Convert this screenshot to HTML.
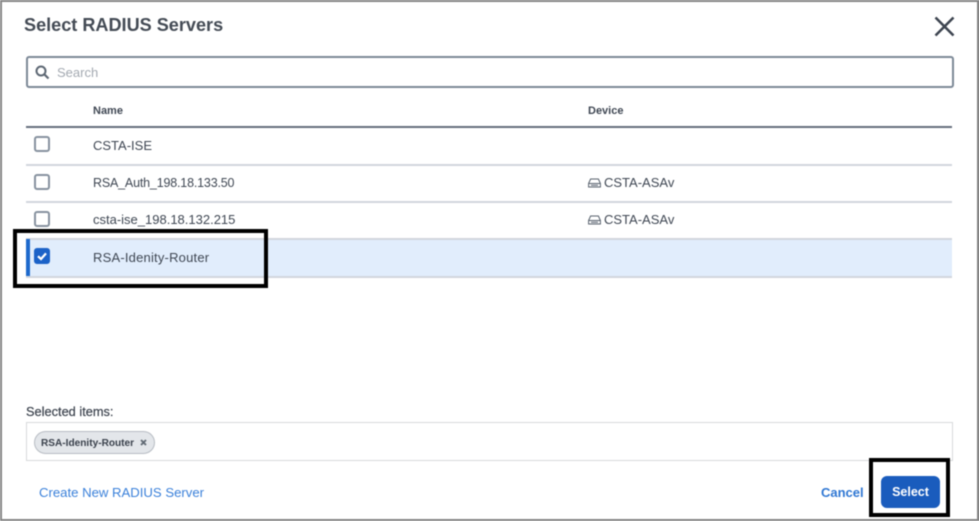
<!DOCTYPE html>
<html><head><meta charset="utf-8"><style>
html,body{margin:0;padding:0;background:#fff}
body{width:979px;height:521px;position:relative;overflow:hidden;font-family:"Liberation Sans",sans-serif;color:#3b4350}
#w{position:absolute;left:0;top:0;width:979px;height:521px;filter:blur(.45px)}
.a{position:absolute;white-space:nowrap}
.cb{position:absolute;left:34.3px;width:11.5px;height:11.5px;border:2px solid #87929f;border-radius:3px;background:#fff}
.ln{position:absolute;left:26px;width:926px;height:2px;background:#d2d6de}
.t{position:absolute;left:93px;font-size:13px;line-height:16px;color:#3f4753;white-space:nowrap}
.d{position:absolute;left:604px;font-size:13px;line-height:16px;color:#3f4753;white-space:nowrap}
svg{position:absolute;overflow:visible}
</style></head><body><div id="w">
<div class="a" style="left:0;top:0;width:975px;height:517px;border:2px solid #858585;border-right-width:3px"></div>
<div class="a" style="left:24px;top:14px;font-size:18.1px;line-height:22px;font-weight:bold;color:#444b55">Select RADIUS Servers</div>
<svg style="left:934px;top:16px" width="21" height="21" viewBox="0 0 21 21"><path d="M1.5 1.5L19.5 19.5M19.5 1.5L1.5 19.5" stroke="#3e4550" stroke-width="2.6" fill="none"/></svg>
<div class="a" style="left:26px;top:56px;width:924px;height:28px;border:2px solid #7d8997;border-radius:3px"></div>
<svg style="left:35px;top:65px" width="15" height="15" viewBox="0 0 15 15"><circle cx="6" cy="6" r="4.5" stroke="#5d6773" stroke-width="2" fill="none"/><path d="M9.5 9.5L13.5 13.5" stroke="#5d6773" stroke-width="2.2" fill="none"/></svg>
<div class="a" style="left:57px;top:65px;font-size:13px;line-height:16px;color:#a3a9b1">Search</div>
<div class="a" style="left:93px;top:104px;font-size:11px;line-height:15px;font-weight:bold;color:#3f4753">Name</div>
<div class="a" style="left:588px;top:104px;font-size:11px;line-height:15px;font-weight:bold;color:#3f4753">Device</div>
<div class="a" style="left:26px;top:126px;width:926px;height:2px;background:#666f7d"></div>
<div class="ln" style="top:164px"></div>
<div class="ln" style="top:201px"></div>
<div class="a" style="left:26px;top:239px;width:926px;height:38px;background:#e1edfc"></div>
<div class="ln" style="top:238px"></div>
<div class="ln" style="top:276px"></div>
<div class="a" style="left:26px;top:239px;width:4px;height:37px;background:#1d69cc"></div>
<div class="cb" style="top:136px"></div>
<div class="cb" style="top:174px"></div>
<div class="cb" style="top:211px"></div>
<div class="cb" style="top:248px;background:#1b62c8;border-color:#1b62c8"></div>
<svg style="left:34.3px;top:248px" width="16" height="16" viewBox="0 0 16 16"><path d="M4 8.2L7 11L12 5.4" stroke="#fff" stroke-width="2.2" fill="none"/></svg>
<div class="t" style="top:138px">CSTA-ISE</div>
<div class="t" style="top:175px;font-size:12.5px;letter-spacing:-.18px">RSA_Auth_198.18.133.50</div>
<div class="t" style="top:212px">csta-ise_198.18.132.215</div>
<div class="t" style="top:250px;letter-spacing:.2px">RSA-Idenity-Router</div>
<svg style="left:588px;top:178px" width="13" height="10" viewBox="0 0 13 10"><path d="M.6 5.5L2.6 1H10.4L12.4 5.5V9H.6ZM.6 5.5H12.4M3 7.3H10" stroke="#59626e" stroke-width="1" fill="none"/></svg>
<svg style="left:588px;top:215px" width="13" height="10" viewBox="0 0 13 10"><path d="M.6 5.5L2.6 1H10.4L12.4 5.5V9H.6ZM.6 5.5H12.4M3 7.3H10" stroke="#59626e" stroke-width="1" fill="none"/></svg>
<div class="d" style="top:175px">CSTA-ASAv</div>
<div class="d" style="top:212px">CSTA-ASAv</div>
<div class="a" style="left:13px;top:229px;width:247px;height:51px;border:4px solid #000"></div>
<div class="a" style="left:26px;top:404px;font-size:12.8px;line-height:15px;color:#3a414c;-webkit-text-stroke:.2px #3a414c">Selected items:</div>
<div class="a" style="left:26px;top:422px;width:925px;height:37px;border:1px solid #d8d9db"></div>
<div class="a" style="left:34px;top:431px;width:119px;height:21px;border:1px solid #b7bcc3;border-radius:12px;background:#e3e6ea"></div>
<div class="a" style="left:41px;top:437px;font-size:10.1px;line-height:14px;font-weight:bold;color:#3a414c">RSA-Idenity-Router</div>
<svg style="left:140px;top:439px" width="7" height="7" viewBox="0 0 7 7"><path d="M1 1L6 6M6 1L1 6" stroke="#5f6873" stroke-width="1.8" fill="none"/></svg>
<div class="a" style="left:39px;top:485px;font-size:13.15px;line-height:16px;color:#3b81da">Create New RADIUS Server</div>
<div class="a" style="left:821px;top:485px;font-size:13px;line-height:16px;font-weight:bold;color:#2f77d3">Cancel</div>
<div class="a" style="left:881px;top:476px;width:59px;height:32px;background:#1a5cbd;border-radius:6px;color:#fff;font-size:12.5px;line-height:33px;font-weight:bold;text-align:center">Select</div>
<div class="a" style="left:869px;top:458px;width:73px;height:51px;border:4px solid #000"></div>
</div></body></html>
